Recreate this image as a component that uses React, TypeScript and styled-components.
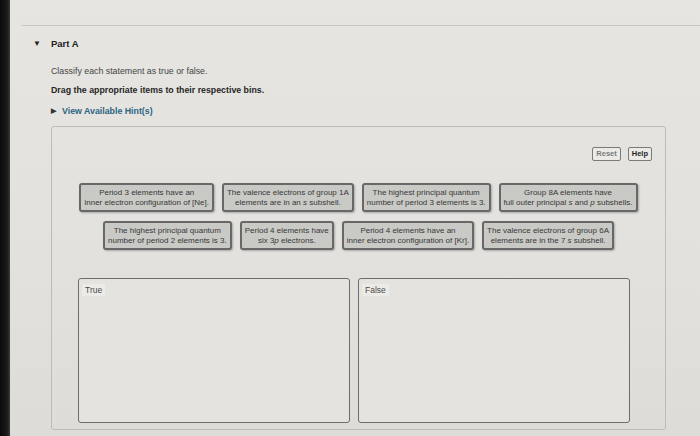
import React from "react";
import styled, { createGlobalStyle } from "styled-components";

const Global = createGlobalStyle`
  html, body { margin: 0; padding: 0; }
  body {
    width: 700px;
    height: 436px;
    overflow: hidden;
    background: #e3e2de;
    font-family: "Liberation Sans", Arial, sans-serif;
    color: #2c2c2c;
  }
`;

const Screen = styled.div`
  display: flex;
  height: 436px;
  background: linear-gradient(180deg, #e6e5e2 0%, #e2e1dd 60%, #dddcd8 100%);
`;

const Bezel = styled.div`
  width: 10px;
  flex: none;
  background: linear-gradient(90deg, #0a0a0a 0%, #1a1a1a 70%, #3a3a3a 100%);
`;

const Main = styled.div`
  flex: 1;
  display: flex;
  flex-direction: column;
`;

const TopSpace = styled.div`
  height: 25px;
`;

const Rule = styled.div`
  margin-left: 12px;
  border-top: 1px solid #c6c5c1;
`;

const PartRow = styled.div`
  display: flex;
  align-items: center;
  margin: 11px 0 0 23px;
  height: 12px;
  font-size: 9.5px;
  font-weight: bold;
  color: #222;
`;

const Caret = styled.span`
  width: 18px;
  font-size: 8px;
  color: #222;
`;

const Content = styled.div`
  padding-left: 41px;
`;

const Prompt = styled.p<{ $bold?: boolean; $top: number }>`
  margin: ${(p) => p.$top}px 0 0;
  line-height: 10px;
  font-size: 8.8px;
  font-weight: ${(p) => (p.$bold ? "bold" : "normal")};
  color: ${(p) => (p.$bold ? "#262626" : "#444")};
`;

const HintLink = styled.div`
  margin-top: 11px;
  display: flex;
  align-items: center;
  height: 10px;
  font-size: 8.8px;
  font-weight: bold;
  color: #2d6484;
`;

const HintCaret = styled.span`
  width: 11px;
  font-size: 7px;
  color: #333;
`;

const Panel = styled.div`
  margin-top: 10px;
  width: 613px;
  height: 302px;
  border: 1px solid #bdbcb8;
  border-radius: 3px;
  display: flex;
  flex-direction: column;
`;

const Toolbar = styled.div`
  display: flex;
  justify-content: flex-end;
  gap: 7px;
  margin-top: 20px;
  padding-right: 13px;
`;

const ToolButton = styled.button<{ $dim?: boolean }>`
  height: 14px;
  padding: 0 3px;
  border: 1px solid #7a7a7a;
  border-radius: 2px;
  background: #ebeae7;
  font-family: "Liberation Sans", Arial, sans-serif;
  font-size: 7.5px;
  font-weight: bold;
  color: ${(p) => (p.$dim ? "#7a7a7a" : "#222")};
  line-height: 12px;
`;

const TileRow = styled.div<{ $top: number }>`
  display: flex;
  justify-content: center;
  gap: 8px;
  margin-top: ${(p) => p.$top}px;
`;

const Tile = styled.div`
  height: 23px;
  padding: 1px 3px;
  display: flex;
  flex-direction: column;
  justify-content: center;
  align-items: center;
  background: #c9c9c5;
  border: 2px solid #686868;
  border-radius: 3px;
  box-shadow: 1px 1px 2px rgba(0, 0, 0, 0.25);
  font-size: 8px;
  line-height: 9.5px;
  color: #383838;
  white-space: nowrap;
  text-align: center;
`;

const Bins = styled.div`
  display: flex;
  gap: 8px;
  margin-top: 28px;
  padding-left: 26px;
`;

const Bin = styled.div`
  width: 270px;
  height: 143px;
  border: 1.5px solid #6c6c6c;
  border-radius: 3px;
  background: #e4e3df;
  position: relative;
`;

const BinLabel = styled.span`
  display: inline-block;
  margin: 2px 0 0 3px;
  padding: 1px 3px;
  background: #ecebe8;
  font-size: 8.5px;
  color: #4a4a4a;
`;

const tiles1: [React.ReactNode, React.ReactNode][] = [
  ["Period 3 elements have an", "inner electron configuration of [Ne]."],
  [
    "The valence electrons of group 1A",
    <>elements are in an <i>s</i> subshell.</>,
  ],
  ["The highest principal quantum", "number of period 3 elements is 3."],
  [
    "Group 8A elements have",
    <>full outer principal <i>s</i> and <i>p</i> subshells.</>,
  ],
];

const tiles2: [React.ReactNode, React.ReactNode][] = [
  ["The highest principal quantum", "number of period 2 elements is 3."],
  ["Period 4 elements have", <>six 3<i>p</i> electrons.</>],
  ["Period 4 elements have an", "inner electron configuration of [Kr]."],
  [
    "The valence electrons of group 6A",
    <>elements are in the 7 <i>s</i> subshell.</>,
  ],
];

export default function App() {
  return (
    <>
      <Global />
      <Screen>
        <Bezel />
        <Main>
          <TopSpace />
          <Rule />
          <PartRow>
            <Caret>▼</Caret>
            Part A
          </PartRow>
          <Content>
            <Prompt $top={17}>Classify each statement as true or false.</Prompt>
            <Prompt $top={9} $bold>
              Drag the appropriate items to their respective bins.
            </Prompt>
            <HintLink>
              <HintCaret>▶</HintCaret>
              View Available Hint(s)
            </HintLink>
            <Panel>
              <Toolbar>
                <ToolButton $dim>Reset</ToolButton>
                <ToolButton>Help</ToolButton>
              </Toolbar>
              <TileRow $top={22}>
                {tiles1.map((t, i) => (
                  <Tile key={i}>
                    <span>{t[0]}</span>
                    <span>{t[1]}</span>
                  </Tile>
                ))}
              </TileRow>
              <TileRow $top={9}>
                {tiles2.map((t, i) => (
                  <Tile key={i}>
                    <span>{t[0]}</span>
                    <span>{t[1]}</span>
                  </Tile>
                ))}
              </TileRow>
              <Bins>
                <Bin>
                  <BinLabel>True</BinLabel>
                </Bin>
                <Bin>
                  <BinLabel>False</BinLabel>
                </Bin>
              </Bins>
            </Panel>
          </Content>
        </Main>
      </Screen>
    </>
  );
}
